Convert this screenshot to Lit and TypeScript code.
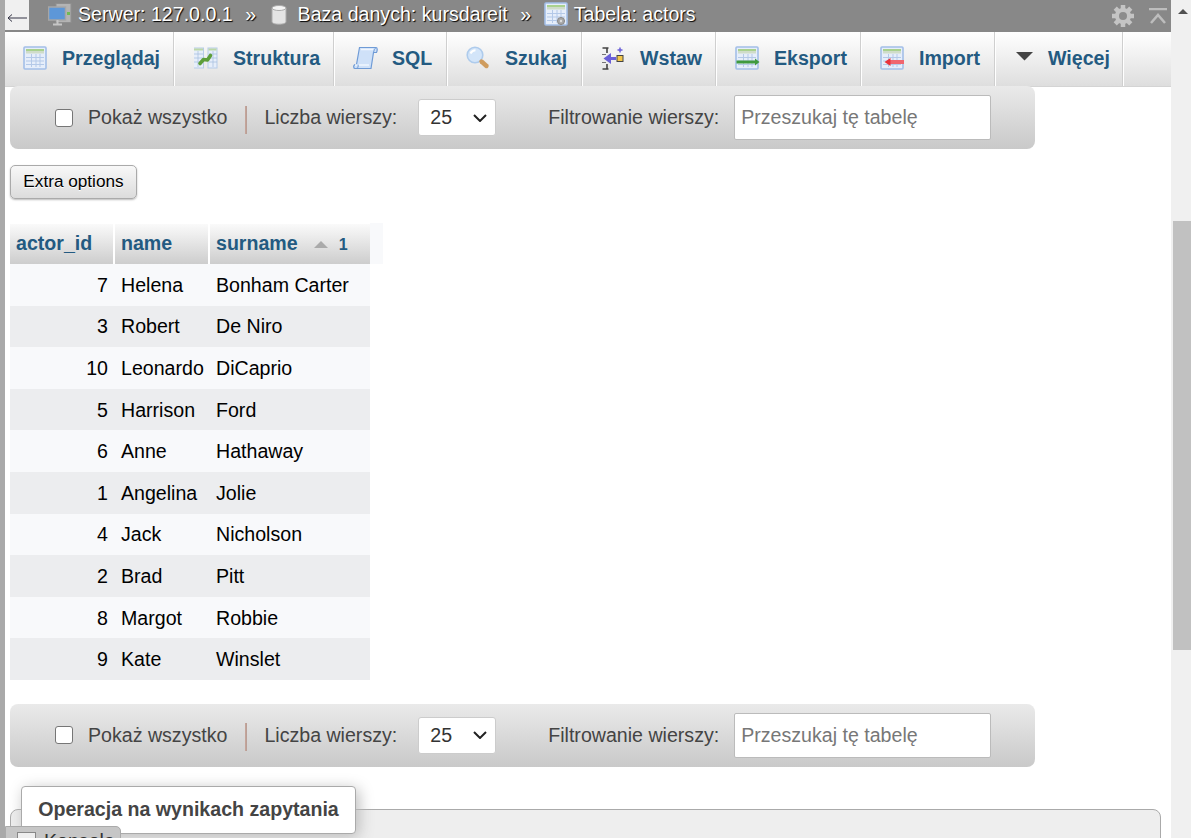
import { LitElement, html, css, svg } from "lit";
import { customElement } from "lit/decorators.js";

const tableIcon = (extra: unknown = null) => svg`
  <rect x="1" y="1" width="22" height="22" rx="1" fill="#e6eefa" stroke="#a3bfe8" stroke-width="1.600"/>
  <rect x="3" y="3" width="18" height="2" fill="#a9d18e"/>
  <rect x="3" y="5" width="18" height="2.500" fill="#cfdcc9"/>
  <path d="M3 11.500h18M3 15h18M3 18.500h18M8.500 8v13M13 8v13M17 8v13" stroke="#b4c9e8" fill="none"/>
  ${extra}`;

const icons: Record<string, unknown> = {
  browse: tableIcon(),
  structure: svg`<g transform="translate(-1 0)">
    <rect x="0.500" y="2" width="10" height="20" fill="#e6eefa" stroke="#b6cbe8"/>
    <rect x="15" y="2" width="9" height="20" fill="#e6eefa" stroke="#b6cbe8"/>
    <rect x="1" y="2.500" width="9" height="2" fill="#bcd8a8"/>
    <rect x="15.500" y="2.500" width="8" height="2" fill="#bcd8a8"/>
    <path d="M1 8h9M1 12h9M1 16h9M5 5v16M16 8h8M16 12h8M16 16h8M20 5v16" stroke="#a9c0e0" stroke-width="0.800"/>
    <path d="M7 17.500l3.500-4 4 .5 3-4.500" stroke="#5d9e3a" stroke-width="3.600" fill="none" stroke-linecap="round" stroke-linejoin="round"/></g>`,
  sql: svg`
    <path d="M6.500 1.500H23c1.500 0 1.500 3 .5 5h-3l-2.500 16H2c-1.500 0-2-3 0-4h1.500z" fill="#cfe1f8" stroke="#6f9bd6" stroke-width="1.200"/>
    <path d="M8 3.500h12M2 19h14" stroke="#f0f6fe" stroke-width="1.500"/>
    <path d="M20.500 6.500c.5-2 1-4 2.500-5M3 22.500c2 0 2.500-2 2-4" fill="none" stroke="#6f9bd6"/>`,
  search: svg`
    <circle cx="9" cy="9" r="7.800" fill="#d3e5f9" stroke="#aecbec" stroke-width="1.600"/>
    <path d="M4.500 7.500c1-2 3-3.200 5-3.200" stroke="#fff" stroke-width="2" fill="none"/>
    <path d="M15.500 15.500l5 4.500" stroke="#cf9c5e" stroke-width="4.400" stroke-linecap="round"/>`,
  insert: svg`
    <path d="M1.500 2h6M1.500 23h6M6 2v5M6 18v5" fill="none" stroke="#444" stroke-width="1.600"/>
    <path d="M1 8.500h4M1 16.500h4" stroke="#777" stroke-width="1.200"/>
    <path d="M15 12v-1H10V7L2.500 12.500 10 18v-4h5z" fill="#6a5fd8"/>
    <rect x="16" y="9.500" width="6" height="6" fill="#f2c548" stroke="#444"/>
    <path d="M19 1.500v5M16.500 4h5" stroke="#6a5fd8" stroke-width="1.500"/>`,
  export: tableIcon(svg`
    <path d="M1.500 16h19" stroke="#3f9a3f" stroke-width="3"/>
    <path d="M20 12.500l4.500 3.500-4.500 3.500z" fill="#3f9a3f"/>`),
  import: tableIcon(svg`
    <path d="M9 16h15" stroke="#f0666e" stroke-width="4"/>
    <path d="M10.500 12l-6 4 6 4z" fill="#e8323c"/>`),
  more: svg`<path d="M0 6h17l-8.500 8.500z" fill="#444"/>`,
};

interface Row { id: number; name: string; surname: string }
const rows: Row[] = [
  { id: 7, name: "Helena", surname: "Bonham Carter" },
  { id: 3, name: "Robert", surname: "De Niro" },
  { id: 10, name: "Leonardo", surname: "DiCaprio" },
  { id: 5, name: "Harrison", surname: "Ford" },
  { id: 6, name: "Anne", surname: "Hathaway" },
  { id: 1, name: "Angelina", surname: "Jolie" },
  { id: 4, name: "Jack", surname: "Nicholson" },
  { id: 2, name: "Brad", surname: "Pitt" },
  { id: 8, name: "Margot", surname: "Robbie" },
  { id: 9, name: "Kate", surname: "Winslet" },
];

const tabs = [
  { label: "Przeglądaj", icon: "browse", w: 169, pad: 18 },
  { label: "Struktura", icon: "structure", w: 160, pad: 20 },
  { label: "SQL", icon: "sql", w: 113, pad: 19 },
  { label: "Szukaj", icon: "search", w: 135, pad: 19 },
  { label: "Wstaw", icon: "insert", w: 134, pad: 19 },
  { label: "Eksport", icon: "export", w: 145, pad: 19 },
  { label: "Import", icon: "import", w: 134, pad: 19 },
  { label: "Więcej", icon: "more", w: 128, pad: 21 },
];

@customElement("app-root")
export class AppRoot extends LitElement {
  static styles = css`
    :host {
      display: flex;
      width: 1191px;
      height: 838px;
      overflow: hidden;
      background: #fff;
      font-family: "Liberation Sans", Arial, sans-serif;
      font-size: 19.600px;
      color: #000;
      position: relative;
    }
    .strip { width: 5px; flex: none; background: #a9a9a9; }
    .main { width: 1166px; flex: none; display: flex; flex-direction: column; position: relative; }
    .scroll { width: 20px; flex: none; background: #f0f0f0; position: relative; }
    .scroll .up {
      position: absolute; left: 7px; top: 9px; width: 0; height: 0;
      border-left: 5.500px solid transparent; border-right: 5.500px solid transparent; border-bottom: 5px solid #505050;
    }
    .scroll .thumb { position: absolute; left: 2px; right: 0; top: 221px; height: 429px; background: #c1c1c1; }

    .crumbs {
      height: 32px; flex: none; background: #888; color: #fff; display: flex; align-items: flex-start;
      text-shadow: 1px 1px 1px #000;
    }
    .back {
      width: 24px; height: 30px; background: #f0f0f0; flex: none;
      display: flex; align-items: center; justify-content: center; padding-top: 5px; box-sizing: border-box;
    }
    .crumb-items { display: flex; align-items: center; height: 29px; margin-left: 19px; }
    .crumb { display: flex; align-items: center; gap: 6px; white-space: pre; }
    .crumb svg { flex: none; }
    .db { margin-right: 3px; }
    .sep { margin: 0 12.500px; }
    .tools { margin-left: auto; display: flex; align-items: center; gap: 14px; height: 32px; padding-right: 4px; }

    .tabs {
      height: 55px; margin-bottom: -1px; flex: none; display: flex; position: relative;
      background: linear-gradient(#fff, #dedede);
      border-bottom: 1px solid #d4d4d4;
      box-sizing: border-box;
    }
    .tab {
      box-sizing: border-box; display: flex; align-items: center; color: #235a81; font-weight: bold;
      border-right: 1px solid #cfcfcf; box-shadow: 1px 0 0 #fff;
      flex: none; white-space: nowrap; padding-bottom: 2px;
    }
    .tab .ic { width: 25px; height: 25px; flex: none; margin-right: 14px; }
    .tab .ic.small { width: 18px; }

    .bar {
      box-sizing: border-box; margin-left: 5px; width: 1025px; height: 63px; flex: none;
      background: linear-gradient(#eaeaea, #c9c9c9); border-radius: 8px;
      display: flex; align-items: center; color: #444; position: relative;
    }
    .cb {
      width: 18px; height: 18px; box-sizing: border-box; margin: 0 15px 0 45px; background: #fff;
      border: 1.500px solid #767676; border-radius: 3px; flex: none;
    }
    .divider { width: 2px; height: 28px; margin: 4px 17px 0 18px; background: linear-gradient(90deg,#c9a79c,#b59c94); flex: none; }
    .select {
      box-sizing: border-box; width: 78px; height: 37px; background: #fff; border: 1px solid #ccc; border-radius: 3px;
      margin-left: 21px; margin-right: 52px; padding-left: 11px; display: flex; align-items: center; justify-content: space-between;
      color: #333; flex: none;
    }
    .select svg { margin-right: 8px; }
    .bar .search {
      box-sizing: border-box; width: 257px; height: 45px; background: #fff; border: 1px solid #bbb; border-radius: 2px;
      margin-left: 15px; padding-left: 6px; display: flex; align-items: center; color: #777; flex: none;
    }
    .l { white-space: nowrap; }

    .extra {
      margin: 16px 0 0 5px; width: 127px; height: 34px; box-sizing: border-box; font-size: 17.200px; padding-bottom: 2px;
      color: #000; background: linear-gradient(#f8f8f8, #dcdcdc); border: 1px solid #aaa; border-radius: 5px;
      box-shadow: 0 1px 2px #bbb; display: flex; align-items: center; justify-content: center; flex: none; text-shadow: 0 1px 0 #fff;
    }

    table { border-collapse: separate; border-spacing: 0; margin: 25px 0 0 5px; table-layout: fixed; width: 373px; flex: none; }
    th {
      height: 40px; padding: 0 6px 1px; text-align: left; color: #235a81; font-size: 19.600px; font-weight: bold; box-sizing: border-box;
      background: linear-gradient(#fafafa, #cdcdcd); border-right: 2px solid #fff; white-space: nowrap;
    }
    th.last { border-right: none; }
    th.pad { background: #f8f9fb; padding: 0; box-shadow: 0 -1px 0 #f8f9fb, 0 1px 0 #f8f9fb; }
    th .tri {
      display: inline-block; width: 0; height: 0; margin: 0 11px 2px 16px;
      border-left: 7px solid transparent; border-right: 7px solid transparent; border-bottom: 7px solid #aaa;
    }
    th .num { font-size: 16px; }
    td { height: 41.600px; padding: 1px 6px 0; box-sizing: border-box; white-space: nowrap; }
    td.id { text-align: right; padding-right: 7px; }
    tr.odd td { background: #f8f9fb; }
    tr.even td { background: #ecedef; }
    td.pad { background: #fff !important; padding: 0; }

    .fieldset {
      margin: 42px 0 0 5px; width: 1151px; height: 100px; flex: none; box-sizing: border-box; background: #eee;
      border: 1px solid #aaa; border-radius: 8px 8px 0 0; position: relative;
    }
    .bottom { margin-top: 24px; }
    .legend {
      position: absolute; left: 10px; top: -24px; width: 335px; height: 48px; box-sizing: border-box; background: #fff;
      border: 1px solid #aaa; border-radius: 4px; box-shadow: 3px 3px 15px #bbb; font-weight: bold; color: #444;
      display: flex; align-items: center; justify-content: center;
    }
    .console {
      position: absolute; left: 0; top: 826px; width: 116px; height: 30px; box-sizing: border-box; background: #c6c6c6;
      border: 1px solid #aaa; border-radius: 0 5px 0 0; padding-left: 11px; color: #333; display: flex; align-items: flex-start; gap: 8px;
      line-height: 20px;
    }
    .console span { margin-top: 4px; }
    .console i { width: 19px; height: 14px; margin-top: 5px; background: #eee; border: 1px solid #888; box-sizing: border-box; flex: none; }
  `;

  private bar() {
    return html`<div class="bar">
      <span class="cb"></span>
      <span class="l">Pokaż wszystko</span>
      <span class="divider"></span>
      <span class="l">Liczba wierszy:</span>
      <span class="select">25
        <svg width="14" height="8" viewBox="0 0 14 8"><path d="M1 1l6 6 6-6" fill="none" stroke="#222" stroke-width="2"/></svg>
      </span>
      <span class="l">Filtrowanie wierszy:</span>
      <span class="search">Przeszukaj tę tabelę</span>
    </div>`;
  }

  render() {
    return html`
      <div class="strip"></div>
      <div class="main">
        <div class="crumbs">
          <div class="back">
            <svg width="20" height="12" viewBox="0 0 20 12"><path d="M20 6H1M5 2.500L1 6l4 3.500" fill="none" stroke="#334" stroke-width="1"/></svg>
          </div>
          <div class="crumb-items">
            <span class="crumb">
              <svg width="24" height="24" viewBox="0 0 24 24">
                <rect x="8" y="0.500" width="15" height="19" fill="#b4b4b4" stroke="#8f8f8f"/>
                <rect x="0.500" y="4" width="17" height="13" fill="#5d97d8" stroke="#a6a6a6" stroke-width="1.500"/>
                <rect x="19" y="9" width="3" height="3" fill="#6fbb55"/>
                <path d="M5 21.500h9M9.500 17v4" stroke="#c6c6c6" stroke-width="2"/>
              </svg>Serwer: 127.0.0.1</span>
            <span class="sep">»</span>
            <span class="crumb">
              <svg class="db" width="20" height="24" viewBox="0 0 20 24">
                <path d="M3 5v14c0 3 14 3 14 0V5z" fill="#e4e4e4" stroke="#aaa"/>
                <ellipse cx="10" cy="5" rx="7" ry="2.500" fill="#f4f4f4" stroke="#aaa"/>
              </svg>Baza danych: kursdareit</span>
            <span class="sep">»</span>
            <span class="crumb">
              <svg width="24" height="25" viewBox="0 0 24 25">
                ${tableIcon(svg`<path d="M17 15v8M13 19h8M14.200 16.200l5.600 5.600M19.800 16.200l-5.600 5.600" stroke="#9a9a9a" stroke-width="2"/><circle cx="17" cy="19" r="3.500" fill="#a8a8a8" stroke="#8c8c8c"/><circle cx="17" cy="19" r="1.200" fill="#ddd"/>`)}
              </svg>Tabela: actors</span>
          </div>
          <div class="tools">
            <svg width="24" height="24" viewBox="0 0 24 24">
              <path d="M12 1v22M1 12h22M4.200 4.200l15.600 15.600M19.800 4.200L4.200 19.800" stroke="#c4c4c4" stroke-width="4.500"/>
              <circle cx="12" cy="12" r="8" fill="#c4c4c4"/>
              <circle cx="12" cy="12" r="4" fill="#8c8c8c"/>
            </svg>
            <svg width="18" height="16" viewBox="0 0 18 16"><path d="M0 1h18M2 15l7-8 7 8" fill="none" stroke="#bdbdbd" stroke-width="2.500"/></svg>
          </div>
        </div>
        <div class="tabs">
          ${tabs.map((t) => html`<div class="tab" style="width:${t.w}px;padding-left:${t.pad}px">
            <svg class="ic ${t.icon === "more" ? "small" : ""}" viewBox="0 0 ${t.icon === "more" ? 18 : 25} 25">${icons[t.icon]}</svg>${t.label}
          </div>`)}
        </div>
        ${this.bar()}
        <div class="extra">Extra options</div>
        <table>
          <colgroup><col style="width:105px" /><col style="width:95px" /><col style="width:160px" /><col style="width:13px" /></colgroup>
          <thead>
            <tr>
              <th>actor_id</th><th>name</th>
              <th class="last">surname<span class="tri"></span><span class="num">1</span></th>
              <th class="pad last"></th>
            </tr>
          </thead>
          <tbody>
            ${rows.map((r, i) => html`<tr class=${i % 2 ? "even" : "odd"}>
              <td class="id">${r.id}</td><td>${r.name}</td><td>${r.surname}</td><td class="pad"></td>
            </tr>`)}
          </tbody>
        </table>
        <div class="bottom">${this.bar()}</div>
        <div class="fieldset"><div class="legend">Operacja na wynikach zapytania</div></div>
        <div class="console"><i></i><span>Konsola</span></div>
      </div>
      <div class="scroll"><span class="up"></span><span class="thumb"></span></div>
    `;
  }
}
